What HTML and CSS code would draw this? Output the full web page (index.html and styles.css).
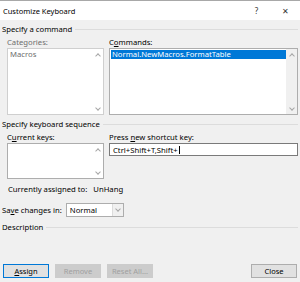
FILE: index.html
```html
<!DOCTYPE html>
<html lang="en">
<head>
  <meta charset="UTF-8">
  <title>Customize Keyboard</title>
  <link rel="stylesheet" href="styles.css">
</head>
<body>
  <div class="dialog">
    <div class="titlebar">
      <span class="title">Customize Keyboard</span>
      <span class="tb-btn">?</span>
      <span class="tb-btn close-x">&#x2715;</span>
    </div>

    <div class="content">
      <div class="group">Specify a command</div>
      <div class="cols">
        <div class="col-left">
          <div class="label disabled">Categories:</div>
          <div class="listbox tall off">
            <div class="item">Macros</div>
            <div class="scroll">
              <span class="arr up"></span>
              <span class="arr down"></span>
            </div>
          </div>
        </div>
        <div class="col-right">
          <div class="label">C<u>o</u>mmands:</div>
          <div class="listbox tall">
            <div class="item sel">Normal.NewMacros.FormatTable</div>
            <div class="scroll grey">
              <span class="arr up"></span>
              <span class="arr down"></span>
            </div>
          </div>
        </div>
      </div>

      <div class="group second">Specify keyboard sequence</div>
      <div class="cols">
        <div class="col-left">
          <div class="label">C<u>u</u>rrent keys:</div>
          <div class="listbox short">
            <div class="scroll">
              <span class="arr up"></span>
              <span class="arr down"></span>
            </div>
          </div>
        </div>
        <div class="col-right">
          <div class="label">Press <u>n</u>ew shortcut key:</div>
          <div class="textbox">Ctrl+Shift+T,Shift+<span class="caret"></span></div>
        </div>
      </div>

      <div class="assigned">
        <span class="assigned-label">Currently assigned to:</span>
        <span>UnHang</span>
      </div>

      <div class="save-row">
        <span class="save-label">Sa<u>v</u>e changes in:</span>
        <div class="combo">
          <span class="combo-val">Normal</span>
          <span class="combo-btn"><span class="arr down"></span></span>
        </div>
      </div>

      <div class="group desc-head">Description</div>
      <div class="desc"></div>

      <div class="buttons">
        <button class="btn default"><u>A</u>ssign</button>
        <button class="btn" disabled>Remove</button>
        <button class="btn" disabled>Reset All...</button>
        <span class="spacer"></span>
        <button class="btn">Close</button>
      </div>
    </div>
  </div>
</body>
</html>
```

FILE: styles.css
```css
* {
  box-sizing: border-box;
}

body {
  margin: 0;
  font-family: 'Noto Sans', 'Open Sans', sans-serif;
  font-size: 7.7px;
  color: #000;
  background: #f0f0f0;
}

.dialog {
  width: 300px;
  height: 282px;
  border-top: 1px solid #a8a8a8;
  display: flex;
  flex-direction: column;
}

.titlebar {
  height: 19px;
  background: #fff;
  display: flex;
  align-items: center;
  padding-left: 3px;
  font-size: 7.5px;
}

.title {
  flex: 1;
}

.tb-btn {
  width: 29px;
  text-align: center;
  color: #333;
  font-size: 8px;
}

.content {
  padding: 3px 2px 0 2px;
  display: flex;
  flex-direction: column;
  flex: 1;
}

.group {
  display: flex;
  align-items: center;
  gap: 3px;
  height: 11px;
  line-height: 11px;
  margin-top: 1px;
  white-space: nowrap;
}

.group::after {
  content: "";
  flex: 1;
  border-top: 1px solid #dcdcdc;
}

.group.second {
  margin-top: 4px;
}

.group.desc-head {
  margin-top: 5px;
}

.cols {
  display: flex;
  gap: 5px;
  padding-left: 5px;
}

.col-left {
  width: 97px;
}

.col-right {
  flex: 1;
}

.label {
  height: 10px;
  line-height: 10px;
  margin-top: 2px;
  margin-bottom: 1px;
  white-space: nowrap;
}

.label.disabled {
  color: #6d6d6d;
}

.listbox {
  position: relative;
  background: #fff;
  border: 1px solid #adadad;
  padding: 1px 11px 1px 1px;
}

.listbox.off {
  border-color: #cfcfcf;
  color: #6d6d6d;
}

.listbox.tall {
  height: 67px;
}

.listbox.short {
  height: 36px;
}

.item {
  height: 9px;
  line-height: 9px;
  padding-left: 1px;
  white-space: nowrap;
}

.item.sel {
  background: #0078d7;
  color: #fff;
}

.scroll {
  position: absolute;
  top: 0;
  right: 0;
  bottom: 0;
  width: 11px;
  display: flex;
  flex-direction: column;
  justify-content: space-between;
  align-items: center;
  padding: 5px 0 4px 0;
}

.scroll.grey {
  background: #f0f0f0;
}

.arr {
  width: 4px;
  height: 4px;
  border-left: 1px solid #a6a6a6;
  border-top: 1px solid #a6a6a6;
  transform: rotate(45deg);
}

.arr.down {
  transform: rotate(225deg);
}

.textbox {
  height: 13px;
  background: #fff;
  border: 1px solid #7a7a7a;
  padding-left: 3px;
  display: flex;
  align-items: center;
  white-space: nowrap;
}

.caret {
  width: 1px;
  height: 8px;
  background: #000;
  margin-left: 1px;
}

.assigned {
  display: flex;
  gap: 6px;
  padding-left: 6px;
  margin-top: 5px;
  height: 11px;
  line-height: 11px;
  white-space: nowrap;
}

.save-row {
  display: flex;
  align-items: center;
  gap: 4px;
  margin-top: 8px;
  height: 14px;
  white-space: nowrap;
}

.combo {
  width: 58px;
  height: 14px;
  display: flex;
  background: #fff;
  border: 1px solid #adadad;
}

.combo-val {
  flex: 1;
  padding-left: 3px;
  line-height: 12px;
}

.combo-btn {
  width: 11px;
  background: #f0f0f0;
  border-left: 1px solid #dcdcdc;
  display: flex;
  align-items: center;
  justify-content: center;
  padding-bottom: 2px;
}

.desc {
  flex: 1;
}

.buttons {
  display: flex;
  gap: 6px;
  padding: 0 1px 4px 1px;
}

.spacer {
  flex: 1;
}

.btn {
  width: 46px;
  height: 14px;
  padding: 0;
  font-family: inherit;
  font-size: 7.5px;
  color: #000;
  background: #e1e1e1;
  border: 1px solid #adadad;
  white-space: nowrap;
}

.btn.default {
  border: 1px solid #0078d7;
}

.btn:disabled {
  background: #cccccc;
  border-color: #cccccc;
  color: #a0a0a0;
}
```
